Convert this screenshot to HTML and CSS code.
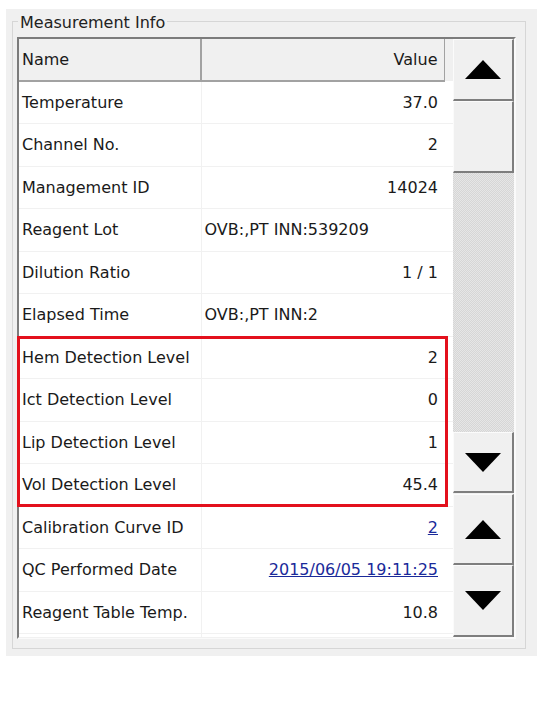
FILE: index.html
```html
<!DOCTYPE html>
<html lang="en">
<head>
    <meta charset="UTF-8">
    <meta name="viewport" content="width=device-width, initial-scale=1.0">
    <title>Measurement Info</title>
    <link rel="stylesheet" href="styles.css">
</head>
<body>
    <div class="panel">
        <fieldset class="group">
            <legend>Measurement Info</legend>

            <div class="list-view">
                <table class="info-table">
                    <thead>
                        <tr>
                            <th class="col-name">Name</th>
                            <th class="col-value">Value</th>
                            <th class="col-pad"></th>
                        </tr>
                    </thead>
                    <tbody>
                        <tr><td>Temperature</td><td class="val">37.0</td><td></td></tr>
                        <tr><td>Channel No.</td><td class="val">2</td><td></td></tr>
                        <tr><td>Management ID</td><td class="val">14024</td><td></td></tr>
                        <tr><td>Reagent Lot</td><td>OVB:,PT INN:539209</td><td></td></tr>
                        <tr><td>Dilution Ratio</td><td class="val">1 / 1</td><td></td></tr>
                        <tr><td>Elapsed Time</td><td>OVB:,PT INN:2</td><td></td></tr>
                        <tr><td>Hem Detection Level</td><td class="val">2</td><td></td></tr>
                        <tr><td>Ict Detection Level</td><td class="val">0</td><td></td></tr>
                        <tr><td>Lip Detection Level</td><td class="val">1</td><td></td></tr>
                        <tr><td>Vol Detection Level</td><td class="val">45.4</td><td></td></tr>
                        <tr><td>Calibration Curve ID</td><td class="val"><a href="#">2</a></td><td></td></tr>
                        <tr><td>QC Performed Date</td><td class="val"><a href="#">2015/06/05 19:11:25</a></td><td></td></tr>
                        <tr><td>Reagent Table Temp.</td><td class="val">10.8</td><td></td></tr>
                        <tr class="cut"><td></td><td></td><td></td></tr>
                    </tbody>
                </table>

                <div class="scroll-col">
                    <div class="sbtn up-1"><span class="arrow-up"></span></div>
                    <div class="sbtn thumb"></div>
                    <div class="track"></div>
                    <div class="sbtn down-1"><span class="arrow-down"></span></div>
                    <div class="sbtn up-2"><span class="arrow-up"></span></div>
                    <div class="sbtn down-2"><span class="arrow-down"></span></div>
                </div>

                <div class="highlight"></div>
            </div>
        </fieldset>
    </div>
</body>
</html>
```

FILE: styles.css
```css
body {
    margin: 0;
    background-color: #ffffff;
    font-family: "DejaVu Sans", "Liberation Sans", sans-serif;
    color: #1a1a1a;
}

.panel {
    width: 531px;
    height: 647px;
    margin: 9px 0 0 6px;
    background-color: #f0f0f0;
    padding: 0 0 0 6px;
    box-sizing: border-box;
    overflow: hidden;
}

.group {
    width: 514px;
    height: 640px;
    margin: 0;
    padding: 4px 0 0 4px;
    border: 1px solid #d6d6d6;
    box-sizing: border-box;
}

.group legend {
    font-size: 16px;
    line-height: 20px;
    padding: 4px 2px 0 2px;
    margin-left: 1px;
    color: #222;
}

.list-view {
    position: relative;
    display: flex;
    width: 499px;
    height: 602px;
    box-sizing: border-box;
    border-top: 2px solid #7c7c7c;
    border-left: 2px solid #7c7c7c;
    border-right: 2px solid #fafafa;
    border-bottom: 2px solid #fafafa;
    background: #ffffff;
}

.info-table {
    border-collapse: collapse;
    table-layout: fixed;
    width: 434px;
    font-size: 16px;
    align-self: flex-start;
}

.info-table th,
.info-table td {
    height: 42.5px;
    padding: 0 0 0 3px;
    text-align: left;
    font-weight: normal;
    white-space: nowrap;
    border-bottom: 1px solid #f1f1f1;
    box-sizing: border-box;
}

.info-table th {
    height: 42px;
    background: #f0f0f0;
    border-bottom: 2px solid #a2a2a2;
}

.col-name {
    width: 182px;
    border-right: 2px solid #a2a2a2;
}

.col-value {
    width: 243px;
}

.info-table th.col-value {
    text-align: right;
    padding-right: 6px;
    border-right: 1px solid #a2a2a2;
}

.info-table th.col-pad {
    width: 9px;
    padding: 0;
    border-bottom: none;
    background: #f0f0f0;
}

.info-table td:first-child {
    border-right: 1px solid #f1f1f1;
}

.info-table td.val {
    text-align: right;
    padding-right: 6px;
}

.info-table td:last-child {
    padding: 0;
}

.info-table tr.cut td {
    height: 4px;
}

.info-table a {
    color: #1a2a9a;
    text-decoration: underline;
}

.scroll-col {
    width: 61px;
    display: flex;
    flex-direction: column;
    background: #f0f0f0;
}

.sbtn {
    box-sizing: border-box;
    background: #f0f0f0;
    border-top: 1px solid #fbfbfb;
    border-left: 1px solid #fbfbfb;
    border-right: 2px solid #7e7e7e;
    border-bottom: 2px solid #7e7e7e;
    display: flex;
    align-items: center;
    justify-content: center;
}

.up-1 {
    height: 62px;
}

.thumb {
    height: 72px;
}

.track {
    height: 260px;
    background: repeating-conic-gradient(#d6d6d6 0 25%, #e6e6e6 0 50%) 0 0 / 2px 2px;
}

.down-1 {
    height: 61px;
}

.up-2 {
    height: 71px;
    margin-top: 1px;
}

.down-2 {
    height: 72px;
}

.arrow-up {
    width: 0;
    height: 0;
    border-left: 18px solid transparent;
    border-right: 18px solid transparent;
    border-bottom: 19px solid #000;
}

.arrow-down {
    width: 0;
    height: 0;
    border-left: 18px solid transparent;
    border-right: 18px solid transparent;
    border-top: 19px solid #000;
}

.highlight {
    position: absolute;
    left: -2px;
    top: 297px;
    width: 431px;
    height: 171px;
    border: 3px solid #e3101c;
    box-sizing: border-box;
    pointer-events: none;
}
```
